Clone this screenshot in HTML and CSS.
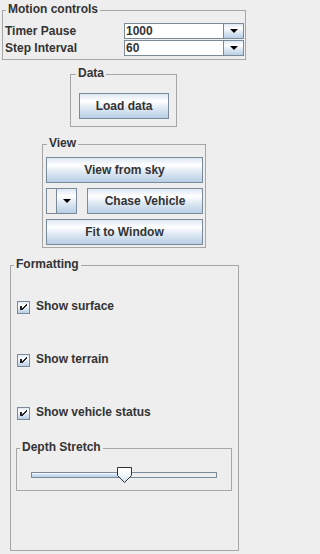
FILE: index.html
```html
<!DOCTYPE html>
<html>
<head>
<meta charset="utf-8">
<link rel="stylesheet" href="styles.css">
</head>
<body>
<div class="panel">
  <div class="group g-motion">
    <div class="title">Motion controls</div>
    <div class="form">
      <div class="label">Timer Pause</div>
      <div class="combo">
        <span class="value">1000</span>
        <span class="arrow"><svg width="8" height="4" viewBox="0 0 8 4"><polygon points="0,0 8,0 4,4" fill="#000"/></svg></span>
      </div>
      <div class="label">Step Interval</div>
      <div class="combo">
        <span class="value">60</span>
        <span class="arrow"><svg width="8" height="4" viewBox="0 0 8 4"><polygon points="0,0 8,0 4,4" fill="#000"/></svg></span>
      </div>
    </div>
  </div>

  <div class="group g-data">
    <div class="title">Data</div>
    <div class="btn btn-load">Load data</div>
  </div>

  <div class="group g-view">
    <div class="title">View</div>
    <div class="stack">
      <div class="btn">View from sky</div>
      <div class="row">
        <div class="mini-combo">
          <span class="field"></span>
          <span class="arrow"><svg width="8" height="4" viewBox="0 0 8 4"><polygon points="0,0 8,0 4,4" fill="#000"/></svg></span>
        </div>
        <div class="btn btn-chase">Chase Vehicle</div>
      </div>
      <div class="btn">Fit to Window</div>
    </div>
  </div>

  <div class="group g-format">
    <div class="title">Formatting</div>
    <div class="check c1">
      <span class="box"><svg width="11" height="11" viewBox="1 1 11 11" shape-rendering="crispEdges"><rect x="3" y="5" width="2" height="4" fill="#222"/><rect x="9" y="3" width="1" height="2" fill="#222"/><rect x="8" y="4" width="1" height="2" fill="#222"/><rect x="7" y="5" width="1" height="2" fill="#222"/><rect x="6" y="6" width="1" height="2" fill="#222"/><rect x="5" y="7" width="1" height="2" fill="#222"/></svg></span>
      <span class="text">Show surface</span>
    </div>
    <div class="check c2">
      <span class="box"><svg width="11" height="11" viewBox="1 1 11 11" shape-rendering="crispEdges"><rect x="3" y="5" width="2" height="4" fill="#222"/><rect x="9" y="3" width="1" height="2" fill="#222"/><rect x="8" y="4" width="1" height="2" fill="#222"/><rect x="7" y="5" width="1" height="2" fill="#222"/><rect x="6" y="6" width="1" height="2" fill="#222"/><rect x="5" y="7" width="1" height="2" fill="#222"/></svg></span>
      <span class="text">Show terrain</span>
    </div>
    <div class="check c3">
      <span class="box"><svg width="11" height="11" viewBox="1 1 11 11" shape-rendering="crispEdges"><rect x="3" y="5" width="2" height="4" fill="#222"/><rect x="9" y="3" width="1" height="2" fill="#222"/><rect x="8" y="4" width="1" height="2" fill="#222"/><rect x="7" y="5" width="1" height="2" fill="#222"/><rect x="6" y="6" width="1" height="2" fill="#222"/><rect x="5" y="7" width="1" height="2" fill="#222"/></svg></span>
      <span class="text">Show vehicle status</span>
    </div>

    <div class="group g-depth">
      <div class="title">Depth Stretch</div>
      <div class="slider">
        <div class="track"><div class="fill" style="width: 88px"></div></div>
        <svg class="thumb" width="15" height="16" viewBox="0 0 15 16">
          <defs>
            <linearGradient id="tg" x1="0" y1="0" x2="0" y2="1">
              <stop offset="0" stop-color="#ffffff"/>
              <stop offset="0.5" stop-color="#f4f8fc"/>
              <stop offset="1" stop-color="#c8ddf2"/>
            </linearGradient>
          </defs>
          <path d="M0.5 0.5 H14.5 V8.5 L7.5 15.5 L0.5 8.5 Z" fill="url(#tg)" stroke="#333" stroke-width="1"/>
        </svg>
      </div>
    </div>
  </div>
</div>
</body>
</html>
```

FILE: styles.css
```css
* { box-sizing: border-box; }

html, body {
  margin: 0;
  padding: 0;
  background: #eeeeee;
}

body {
  font-family: "Liberation Sans", Arial, sans-serif;
  font-size: 12px;
  font-weight: bold;
  color: #333333;
}

.panel {
  width: 248px;
  height: 554px;
  overflow: hidden;
}

.group {
  border: 1px solid #a6a6a6;
  background: #eeeeee;
}

.title {
  display: block;
  width: fit-content;
  background: #eeeeee;
  padding: 0 2px;
  line-height: 15px;
  height: 15px;
  margin-top: -9px;
  margin-left: 3px;
  white-space: nowrap;
}

/* Motion controls */
.g-motion {
  margin: 10px 2px 0 2px;
  width: 244px;
}

.form {
  margin-top: 6px;
  padding: 0 1px 3px 2px;
  display: grid;
  grid-template-columns: 1fr 120px;
  grid-auto-rows: 16px;
  row-gap: 1px;
  align-items: center;
}

.label {
  line-height: 15px;
  white-space: nowrap;
}

.combo {
  height: 16px;
  border: 1px solid #7a8a99;
  background: #ffffff;
  display: flex;
}

.combo .value {
  flex: 1;
  padding-left: 1px;
  line-height: 14px;
  color: #333333;
}

.arrow {
  width: 20px;
  border-left: 1px solid #7a8a99;
  background: linear-gradient(to bottom, #dde8f3 0%, #ffffff 30%, #dde8f3 60%, #b8cfe5 100%);
  display: flex;
  align-items: center;
  justify-content: center;
}

.arrow svg { display: block; }

/* Buttons */
.btn {
  display: flex;
  align-items: center;
  justify-content: center;
  height: 26px;
  border: 1px solid #7a8a99;
  background: linear-gradient(to bottom, #dde8f3 0%, #ffffff 30%, #dde8f3 60%, #b8cfe5 100%);
  line-height: 15px;
  white-space: nowrap;
  color: #333333;
}

/* Data */
.g-data {
  margin: 14px 0 0 70px;
  width: 107px;
}

.g-data .title { margin-left: 5px; }

.btn-load {
  width: 90px;
  margin: 12px 0 7px 8px;
}

/* View */
.g-view {
  margin: 17px 0 0 42px;
  width: 164px;
}

.g-view .title { margin-left: 4px; }

.stack {
  margin-top: 6px;
  padding: 0 2px 2px 3px;
  display: flex;
  flex-direction: column;
  gap: 5px;
}

.row {
  display: flex;
  gap: 10px;
  height: 26px;
}

.mini-combo {
  width: 31px;
  height: 26px;
  border: 1px solid #7a8a99;
  display: flex;
}

.mini-combo .field {
  flex: 1;
  background: #eeeeee;
}

.btn-chase { width: 116px; }

/* Formatting */
.g-format {
  margin: 17px 0 0 10px;
  width: 229px;
  height: 286px;
}

.check {
  display: flex;
  align-items: flex-start;
  height: 13px;
  padding-left: 6px;
  gap: 6px;
}

.check .box {
  width: 13px;
  height: 13px;
  border: 1px solid #7a8a99;
  background: linear-gradient(to bottom, #dde8f3 0%, #ffffff 30%, #dde8f3 60%, #b8cfe5 100%);
  flex: none;
}

.check .box svg { display: block; }

.check .text {
  line-height: 13px;
  margin-top: -1px;
  white-space: nowrap;
}

.c1 { margin-top: 29px; }
.c2 { margin-top: 40px; }
.c3 { margin-top: 40px; }

/* Depth stretch */
.g-depth {
  margin: 28px 0 0 5px;
  width: 216px;
}

.slider {
  position: relative;
  margin: 12px 14px 7px 14px;
  height: 16px;
}

.track {
  position: relative;
  top: 5px;
  height: 6px;
  border: 1px solid #7a8a99;
  background: #eeeeee;
}

.fill {
  height: 4px;
  background: linear-gradient(to bottom, #ffffff 0%, #c8ddf2 50%, #b8cfe5 100%);
}

.thumb {
  position: absolute;
  left: 86px;
  top: 0;
  display: block;
}
```
